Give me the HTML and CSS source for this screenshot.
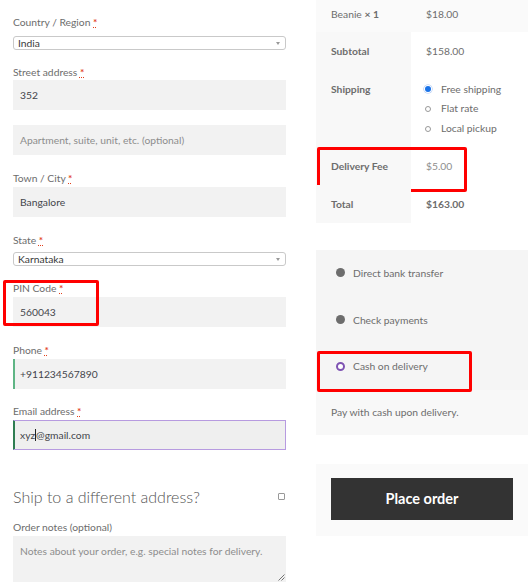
FILE: index.html
```html
<!DOCTYPE html>
<html>
<head>
<meta charset="utf-8">
<link rel="stylesheet" href="styles.css">
</head>
<body>
<div class="page">
  <div class="billing">
    <div class="field f-country">
      <label class="lbl">Country / Region <abbr class="req">*</abbr></label>
      <div class="select"><span>India</span><span class="arrow"></span></div>
    </div>
    <div class="field f-street">
      <label class="lbl">Street address <abbr class="req">*</abbr></label>
      <div class="input">352</div>
      <div class="input ph gap">Apartment, suite, unit, etc. (optional)</div>
    </div>
    <div class="field f-town">
      <label class="lbl">Town / City <abbr class="req">*</abbr></label>
      <div class="input">Bangalore</div>
    </div>
    <div class="field f-state">
      <label class="lbl">State <abbr class="req">*</abbr></label>
      <div class="select"><span>Karnataka</span><span class="arrow"></span></div>
    </div>
    <div class="field f-pin">
      <label class="lbl">PIN Code <abbr class="req">*</abbr></label>
      <div class="input">560043</div>
      <div class="mark mark-pin"></div>
    </div>
    <div class="field f-phone">
      <label class="lbl">Phone <abbr class="req">*</abbr></label>
      <div class="input valid">+911234567890</div>
    </div>
    <div class="field f-email">
      <label class="lbl">Email address <abbr class="req">*</abbr></label>
      <div class="input focus">xyz<span class="caret"></span>@gmail.com</div>
    </div>
    <div class="ship">
      <h3>Ship to a different address?</h3>
      <span class="cbox"></span>
    </div>
    <div class="field f-notes">
      <label class="lbl">Order notes (optional)</label>
      <div class="textarea ph">Notes about your order, e.g. special notes for delivery.<svg class="grip" width="8" height="8" viewBox="0 0 8 8"><path d="M7.5 1.5L1.5 7.5M7.5 4.5L4.5 7.5" stroke="#666" stroke-width="0.9"/></svg></div>
    </div>
  </div>

  <div class="review">
    <div class="table">
      <div class="row item">
        <div class="c1">Beanie <b>× 1</b></div>
        <div class="c2">$18.00</div>
      </div>
      <div class="row sub">
        <div class="c1 th">Subtotal</div>
        <div class="c2">$158.00</div>
      </div>
      <div class="row shipping">
        <div class="c1 th">Shipping</div>
        <div class="c2">
          <ul class="methods">
            <li><span class="rad on"></span>Free shipping</li>
            <li><span class="rad"></span>Flat rate</li>
            <li><span class="rad"></span>Local pickup</li>
          </ul>
        </div>
      </div>
      <div class="row fee">
        <div class="c1 th">Delivery Fee</div>
        <div class="c2">$5.00</div>
        <div class="mark mark-fee"></div>
      </div>
      <div class="row total">
        <div class="c1 th">Total</div>
        <div class="c2"><b>$163.00</b></div>
      </div>
    </div>

    <div class="payment">
      <ul class="pm">
        <li><span class="dot"></span>Direct bank transfer</li>
        <li><span class="dot"></span>Check payments</li>
        <li><span class="dot chk"></span>Cash on delivery<div class="mark mark-cod"></div></li>
      </ul>
      <div class="pbox">Pay with cash upon delivery.</div>
    </div>

    <div class="place">
      <button class="btn">Place order</button>
    </div>
  </div>
</div>
</body>
</html>
```
FILE: styles.css
```css
* { box-sizing: border-box; }
html, body { margin: 0; padding: 0; background: #fff; }
body {
  font-family: Lato, "Liberation Sans", sans-serif;
  font-size: 10.3px;
  color: #6d6d6d;
  width: 530px;
  height: 587px;
  overflow: hidden;
}
.page {
  display: flex;
  align-items: flex-start;
}
.billing {
  width: 273px;
  margin-left: 13px;
}
.field { position: relative; }
.lbl {
  display: block;
  line-height: 16px;
  height: 16px;
  color: #6d6d6d;
}
.req {
  color: #e2401c;
  text-decoration: underline dotted #e2401c;
  font-weight: 600;
}
.f-country { margin-top: 14px; }
.f-street { margin-top: 14px; }
.f-town { margin-top: 15px; }
.f-town .input { margin-top: 1px; }
.f-state { margin-top: 15px; }
.f-pin { margin-top: 14px; }
.f-pin .input { margin-top: 1px; }
.f-phone { margin-top: 15px; }
.f-phone .input { margin-top: 1px; }
.f-email { margin-top: 14px; }
.f-email .input { margin-top: 1px; }
.f-notes { margin-top: 11px; }
.f-notes .textarea { margin-top: 1px; }

.select {
  height: 14px;
  border: 1px solid #c9c9c9;
  border-radius: 3px;
  display: flex;
  align-items: center;
  justify-content: space-between;
  padding: 0 5px 0 4px;
  color: #3a3a3a;
  line-height: 12px;
}
.f-country .select { margin-top: 6px; }
.f-state .select { margin-top: 4px; }
.arrow {
  width: 0; height: 0;
  border-left: 2.5px solid transparent;
  border-right: 2.5px solid transparent;
  border-top: 3px solid #999;
}
.input {
  height: 30px;
  background: #f2f2f2;
  padding: 0 7px;
  line-height: 30px;
  color: #43454b;
  position: relative;
}
.input.gap { margin-top: 15px; }
.ph { color: #8d8d8d; }
.input.valid { box-shadow: inset 2px 0 0 #5fb585; }
.input.focus {
  border: 1px solid #b79be0;
  box-shadow: inset 1px 0 0 #2f7d52;
  border-left-color: #2f7d52;
  background: #efefef;
  padding-left: 6px;
  line-height: 28px;
}
.caret {
  display: inline-block;
  width: 1px;
  height: 12px;
  background: #222;
  vertical-align: -2px;
}
.ship {
  margin-top: 36px;
  display: flex;
  justify-content: space-between;
  align-items: center;
  height: 22px;
}
.ship h3 {
  margin: 0;
  font-size: 16px;
  font-weight: 300;
  color: #555;
  line-height: 22px;
}
.cbox {
  width: 7px; height: 7px;
  border: 1px solid #999;
  border-radius: 1px;
  margin-right: 1px;
  margin-top: -1px;
}
.textarea {
  height: 46px;
  background: #f2f2f2;
  padding: 7px 7px;
  line-height: 16px;
  position: relative;
}
.grip { position: absolute; right: 1px; bottom: 1px; }

.mark {
  position: absolute;
  border: 3px solid #f00;
  border-radius: 2px;
  pointer-events: none;
}
.mark-pin { left: -10px; top: 0; width: 96px; height: 46px; }

/* Right column */
.review {
  width: 212px;
  margin-left: 30px;
}
.row {
  display: flex;
  position: relative;
  line-height: 16px;
}
.c1 { width: 95px; padding: 11px 0 11px 15px; }
.c2 { flex: 1; padding: 11px 0 11px 15px; }
.th { background: #f8f8f8; font-weight: 700; color: #6d6d6d; }
.item { background: #fafafa; }
.item .c1, .item .c2 { padding-top: 6px; padding-bottom: 10px; }
.item b { font-weight: 700; }
.shipping .c2 { padding-bottom: 7px; }
.methods { list-style: none; margin: 0; padding: 0; margin-top: -1.5px; }
.methods li { line-height: 19.7px; display: flex; align-items: center; }
.rad {
  width: 6px; height: 6px;
  border: 1px solid #999;
  border-radius: 50%;
  margin: 0 10px 0 -1px;
}
.rad.on {
  border: none;
  background: #1a73e8;
  box-shadow: 0 0 0 1px #fff, 0 0 0 1.6px #a9c4f2;
}
.fee .c2 { color: #8d8d8d; }
.fee .c1, .fee .c2 { padding-top: 12px; padding-bottom: 11px; }
.total b { font-weight: 700; color: #6d6d6d; }
.mark-fee { left: 1px; top: 1px; width: 150px; height: 45px; }

.payment {
  margin-top: 27px;
  background: #f5f5f5;
}
.pm { list-style: none; margin: 0; padding: 0; }
.pm li {
  position: relative;
  height: 46.7px;
  display: flex;
  align-items: center;
  padding-left: 19.5px;
}
.dot {
  width: 9px; height: 9px;
  border-radius: 50%;
  background: #6d6d6d;
  margin-right: 8.5px;
}
.dot.chk {
  background: #fff;
  border: 2.5px solid #7f54b3;
}
.mark-cod { left: 1px; top: 8px; width: 155px; height: 41px; }
.pbox {
  background: #f8f8f8;
  height: 45px;
  line-height: 45px;
  padding-left: 15px;
  color: #6d6d6d;
}
.place {
  margin-top: 29px;
  background: #fafafa;
  padding: 14px 15px 16px 15px;
}
.btn {
  width: 182px;
  height: 42px;
  border: none;
  background: #333;
  color: #fff;
  font-family: inherit;
  font-size: 14.5px;
  font-weight: 700;
  display: block;
  padding: 0;
}
```
